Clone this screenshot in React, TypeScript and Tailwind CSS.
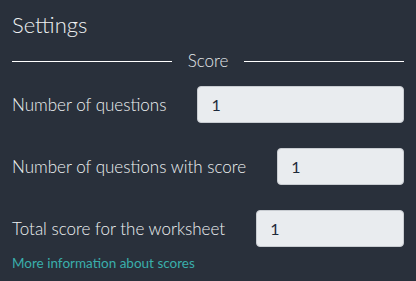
export default function App() {
  const rows = [
    { label: 'Number of questions', value: '1' },
    { label: 'Number of questions with score', value: '1' },
    { label: 'Total score for the worksheet', value: '1' },
  ];

  return (
    <div className="min-h-screen w-full bg-[#29303b] px-3 pt-[9px] font-['Lato',sans-serif] text-[#eef0f2]">
      <h2 className="text-[22px] font-light leading-[32px]">Settings</h2>

      {/* Section divider */}
      <div className="mt-[10px] flex items-center gap-4">
        <div className="h-px flex-1 bg-white" />
        <span className="text-[17px] font-light leading-5 text-[#e4e7ea]">Score</span>
        <div className="h-px flex-1 bg-white" />
      </div>

      <div className="mt-[15px] flex flex-col gap-[25px]">
        {rows.map((row) => (
          <div key={row.label} className="flex items-center">
            <label className="whitespace-nowrap text-[17px] font-light">{row.label}</label>
            <input
              readOnly
              value={row.value}
              className="ml-[31px] h-[37px] min-w-0 flex-1 rounded-[4px] border border-[#c8ccd1] bg-[#e9ecef] px-[13px] text-[16px] text-[#1d2a3a] outline-none"
            />
          </div>
        ))}
      </div>

      <a href="#" className="mt-[6px] block text-[13.5px] text-[#3aaeab]">
        More information about scores
      </a>
    </div>
  );
}
